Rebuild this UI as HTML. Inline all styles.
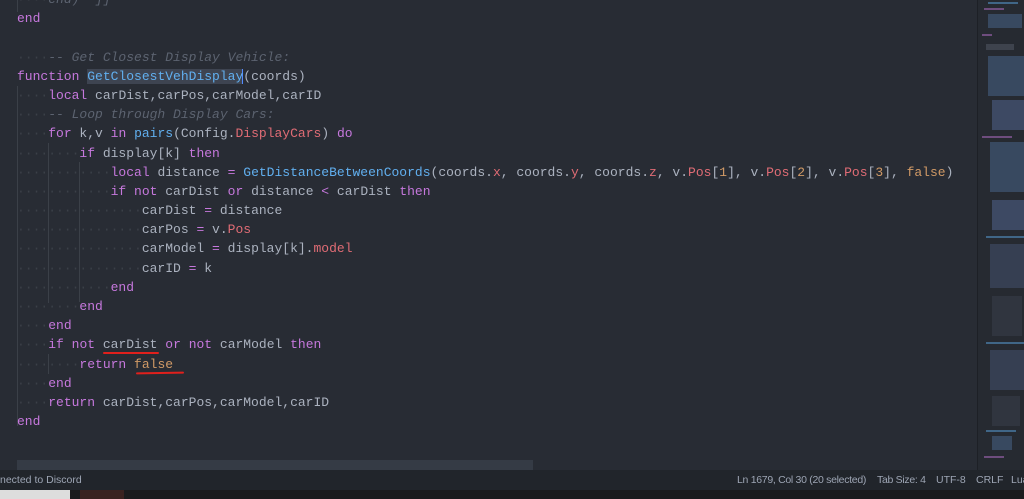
<!DOCTYPE html>
<html><head><meta charset="utf-8"><style>
html,body{margin:0;padding:0;width:1024px;height:499px;overflow:hidden;background:#282c34;}
#ed{position:absolute;left:0;top:0;width:977px;height:470px;background:#282c34;overflow:hidden;}
.code{position:absolute;left:17px;top:-10px;font-family:"Liberation Mono",monospace;font-size:13px;line-height:19.2px;color:#abb2bf;}
.l{height:19.2px;white-space:pre;}
.k{color:#c678dd}.f{color:#61afef}.r{color:#e06c75}.o{color:#d19a66}.c{color:#5c6370;font-style:italic}.d{color:#3b4048}
.sel{background:#3e4451;box-shadow:inset -1px 0 0 #528bff}
.g{position:absolute;width:1px;background:#3b4048;}
#mm{position:absolute;left:977px;top:0;width:47px;height:470px;background:#262a31;border-left:1px solid #1d2026;}
#sb{position:absolute;left:0;top:470px;width:1024px;height:20px;background:#21252b;font-family:"Liberation Sans",sans-serif;font-size:10.5px;color:#9da5b4;line-height:20px;white-space:nowrap;}
#bot{position:absolute;left:0;top:490px;width:1024px;height:9px;background:#1b1b1d;}
.hs{position:absolute;left:17px;top:460px;width:516px;height:10px;background:#353b45;}
.ul{position:absolute;height:2px;background:#e0201c;border-radius:1px;}
</style></head><body>
<div id="ed">
<div class="g" style="left:17px;top:0;height:12px"></div>
<div class="g" style="left:17px;top:86px;height:340px"></div>
<div class="g" style="left:48px;top:143px;height:160px"></div>
<div class="g" style="left:79px;top:162px;height:140px"></div>
<div class="g" style="left:48px;top:354px;height:20px"></div>
<div class="code"><div class="l"><span class="d">····</span><span class="c">end)--]]</span></div><div class="l"><span class="k">end</span></div><div class="l"> </div><div class="l"><span class="d">····</span><span class="c">-- Get Closest Display Vehicle:</span></div><div class="l"><span class="k">function</span> <span class="f sel">GetClosestVehDisplay</span>(coords)</div><div class="l"><span class="d">····</span><span class="k">local</span> carDist,carPos,carModel,carID</div><div class="l"><span class="d">····</span><span class="c">-- Loop through Display Cars:</span></div><div class="l"><span class="d">····</span><span class="k">for</span> k,v <span class="k">in</span> <span class="f">pairs</span>(Config.<span class="r">DisplayCars</span>) <span class="k">do</span></div><div class="l"><span class="d">········</span><span class="k">if</span> display[k] <span class="k">then</span></div><div class="l"><span class="d">············</span><span class="k">local</span> distance <span class="k">=</span> <span class="f">GetDistanceBetweenCoords</span>(coords.<span class="r">x</span>, coords.<span class="r">y</span>, coords.<span class="r">z</span>, v.<span class="r">Pos</span>[<span class="o">1</span>], v.<span class="r">Pos</span>[<span class="o">2</span>], v.<span class="r">Pos</span>[<span class="o">3</span>], <span class="o">false</span>)</div><div class="l"><span class="d">············</span><span class="k">if</span> <span class="k">not</span> carDist <span class="k">or</span> distance <span class="k">&lt;</span> carDist <span class="k">then</span></div><div class="l"><span class="d">················</span>carDist <span class="k">=</span> distance</div><div class="l"><span class="d">················</span>carPos <span class="k">=</span> v.<span class="r">Pos</span></div><div class="l"><span class="d">················</span>carModel <span class="k">=</span> display[k].<span class="r">model</span></div><div class="l"><span class="d">················</span>carID <span class="k">=</span> k</div><div class="l"><span class="d">············</span><span class="k">end</span></div><div class="l"><span class="d">········</span><span class="k">end</span></div><div class="l"><span class="d">····</span><span class="k">end</span></div><div class="l"><span class="d">····</span><span class="k">if</span> <span class="k">not</span> carDist <span class="k">or</span> <span class="k">not</span> carModel <span class="k">then</span></div><div class="l"><span class="d">········</span><span class="k">return</span> <span class="o">false</span></div><div class="l"><span class="d">····</span><span class="k">end</span></div><div class="l"><span class="d">····</span><span class="k">return</span> carDist,carPos,carModel,carID</div><div class="l"><span class="k">end</span></div></div>
<div class="ul" style="left:103px;top:352px;width:56px"></div>
<div class="ul" style="left:136px;top:372px;width:48px;transform:rotate(-1deg)"></div>
<div class="hs"></div>
</div>
<div id="mm">
<svg width="47" height="470" xmlns="http://www.w3.org/2000/svg">
<g opacity="0.45">
<rect x="10" y="2" width="30" height="2" fill="#61afef"/><rect x="6" y="8" width="20" height="2" fill="#c678dd"/>
<rect x="10" y="14" width="34" height="14" fill="#4f6f9a"/><rect x="4" y="34" width="10" height="2" fill="#c678dd"/>
<rect x="8" y="44" width="28" height="6" fill="#5c6370"/><rect x="10" y="56" width="37" height="40" fill="#4f6f9a"/>
<rect x="14" y="100" width="33" height="30" fill="#5a6fa0"/><rect x="4" y="136" width="30" height="2" fill="#c678dd"/>
<rect x="12" y="142" width="35" height="50" fill="#4f6f9a"/><rect x="14" y="200" width="33" height="30" fill="#5a6fa0"/>
<rect x="8" y="236" width="39" height="2" fill="#61afef"/><rect x="12" y="244" width="35" height="44" fill="#4a5a7a"/>
<rect x="14" y="296" width="30" height="40" fill="#3d4450"/><rect x="8" y="342" width="39" height="2" fill="#61afef"/>
<rect x="12" y="350" width="35" height="40" fill="#4a5a7a"/><rect x="14" y="396" width="28" height="30" fill="#3d4450"/>
<rect x="8" y="430" width="30" height="2" fill="#61afef"/><rect x="14" y="436" width="20" height="14" fill="#4f6f9a"/>
<rect x="6" y="456" width="20" height="2" fill="#c678dd"/>
</g></svg>
</div>
<div id="sb">
<span style="position:absolute;left:0">nected to Discord</span>
<span style="position:absolute;left:737px;letter-spacing:-0.3px">Ln 1679, Col 30 (20 selected)</span>
<span style="position:absolute;left:877px;letter-spacing:-0.3px">Tab Size: 4</span>
<span style="position:absolute;left:936px">UTF-8</span>
<span style="position:absolute;left:976px">CRLF</span>
<span style="position:absolute;left:1011px">Lua</span>
</div>
<div id="bot"><div style="position:absolute;left:0;top:0;width:70px;height:9px;background:#ddd"></div><div style="position:absolute;left:80px;top:0;width:44px;height:9px;background:#3a2220"></div></div>
</body></html>
